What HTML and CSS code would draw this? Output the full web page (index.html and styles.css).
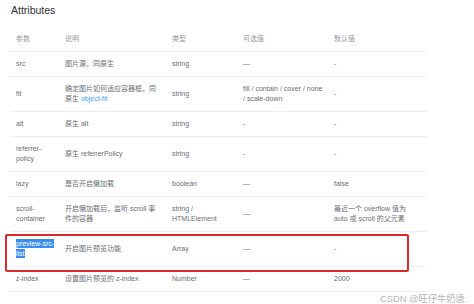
FILE: index.html
```html
<!DOCTYPE html>
<html lang="zh">
<head>
<meta charset="utf-8">
<link rel="stylesheet" href="styles.css">
</head>
<body>
<div class="page">
  <h3 class="title">Attributes</h3>
  <table class="attrs">
    <colgroup>
      <col class="c1"><col class="c2"><col class="c3"><col class="c4"><col class="c5">
    </colgroup>
    <thead>
      <tr><th>参数</th><th>说明</th><th>类型</th><th>可选值</th><th>默认值</th></tr>
    </thead>
    <tbody>
      <tr><td>src</td><td>图片源，同原生</td><td>string</td><td>—</td><td>-</td></tr>
      <tr><td>fit</td><td>确定图片如何适应容器框，同原生 <span class="link">object-fit</span></td><td>string</td><td>fill / contain / cover / none / scale-down</td><td>-</td></tr>
      <tr><td>alt</td><td>原生 alt</td><td>string</td><td>-</td><td>-</td></tr>
      <tr><td>referrer-policy</td><td>原生 referrerPolicy</td><td>string</td><td>-</td><td>-</td></tr>
      <tr><td>lazy</td><td>是否开启懒加载</td><td>boolean</td><td>—</td><td>false</td></tr>
      <tr><td>scroll-container</td><td>开启懒加载后，监听 scroll 事件的容器</td><td>string / HTMLElement</td><td>—</td><td>最近一个 overflow 值为 auto 或 scroll 的父元素</td></tr>
      <tr><td><span class="sel">preview-src-list</span></td><td>开启图片预览功能</td><td>Array</td><td>—</td><td>-</td></tr>
      <tr><td>z-index</td><td>设置图片预览的 z-index</td><td>Number</td><td>—</td><td>2000</td></tr>
    </tbody>
  </table>
  <div class="redbox"></div>
  <div class="watermark">CSDN @旺仔牛奶唐.</div>
</div>
</body>
</html>
```

FILE: styles.css
```css
html, body {
  margin: 0;
  padding: 0;
  background: #ffffff;
}
body {
  width: 474px;
  height: 304px;
  overflow: hidden;
  font-family: "Liberation Sans", "Noto Sans CJK SC", sans-serif;
}
.page {
  position: relative;
  width: 474px;
  height: 304px;
  padding: 3px 0 0 10px;
  box-sizing: border-box;
}
.title {
  margin: 0 0 10px 1px;
  font-size: 10.5px;
  line-height: 14px;
  font-weight: normal;
  color: #303133;
}
.attrs {
  border-collapse: collapse;
  table-layout: fixed;
  width: 417px;
  font-size: 7px;
  line-height: 10px;
  color: #6b6e74;
}
.c1 { width: 49px; }
.c2 { width: 107px; }
.c3 { width: 71px; }
.c4 { width: 91px; }
.c5 { width: 99px; }
.attrs th,
.attrs td {
  padding: 7px 3px 7px 6px;
  text-align: left;
  vertical-align: middle;
  border-bottom: 1px solid #ebeef5;
  word-wrap: break-word;
}
.attrs th {
  font-weight: normal;
  color: #95989e;
}
.attrs td:nth-child(2),
.attrs th:nth-child(2) {
  padding-right: 7px;
}
.attrs td:nth-child(5),
.attrs th:nth-child(5) {
  padding-right: 12px;
}
.link {
  color: #409eff;
}
.sel {
  background: #3b8ef0;
  color: #ffffff;
  padding: 1px 0;
}
.redbox {
  position: absolute;
  left: 5px;
  top: 234px;
  width: 400px;
  height: 34px;
  border: 2px solid #dc2a2a;
  border-radius: 2px;
}
.watermark {
  position: absolute;
  left: 380px;
  top: 293px;
  font-size: 9.3px;
  line-height: 12px;
  color: #b4b4b4;
  white-space: nowrap;
}
```
